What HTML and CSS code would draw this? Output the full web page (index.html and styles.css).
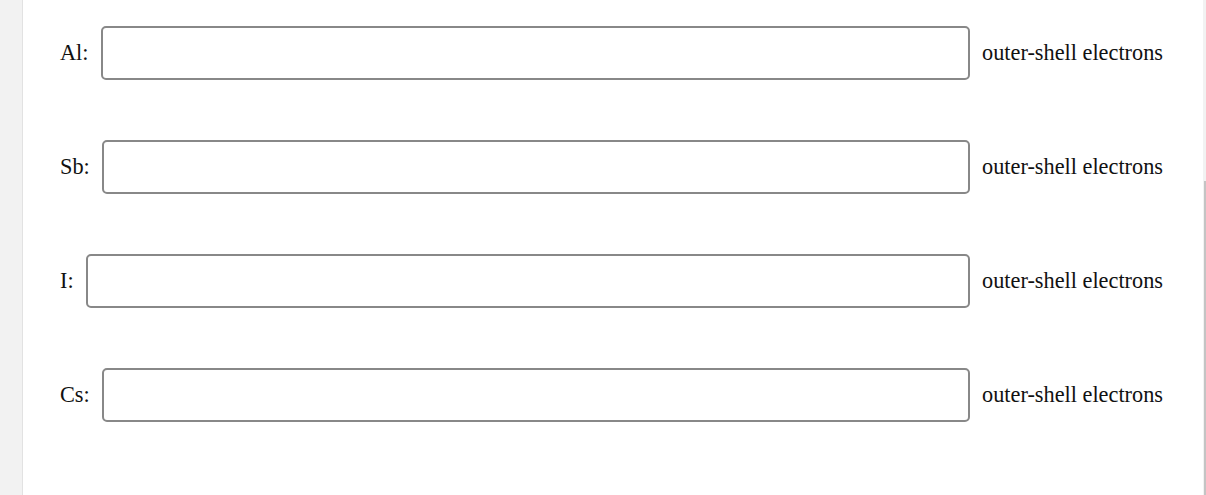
FILE: index.html
```html
<!DOCTYPE html>
<html lang="en">
<head>
  <meta charset="UTF-8" />
  <title>Valence electrons</title>
  <link rel="stylesheet" href="styles.css">
</head>
<body>
  <div class="gutter"></div>
  <div class="page">
    <div class="row">
      <label class="symbol" for="al">Al:</label>
      <input type="text" id="al" class="answer">
      <span class="unit">outer-shell electrons</span>
    </div>
    <div class="row">
      <label class="symbol" for="sb">Sb:</label>
      <input type="text" id="sb" class="answer">
      <span class="unit">outer-shell electrons</span>
    </div>
    <div class="row">
      <label class="symbol" for="i">I:</label>
      <input type="text" id="i" class="answer">
      <span class="unit">outer-shell electrons</span>
    </div>
    <div class="row">
      <label class="symbol" for="cs">Cs:</label>
      <input type="text" id="cs" class="answer">
      <span class="unit">outer-shell electrons</span>
    </div>
  </div>
  <div class="rail"><div class="rail-bar"></div></div>
</body>
</html>
```

FILE: styles.css
```css
html, body {
  height: 100%;
}
body {
  margin: 0;
  display: flex;
  background-color: #f2f2f2;
  font-family: "Liberation Serif", "Times New Roman", serif;
  font-size: 22.3px;
  color: #111;
  overflow: hidden;
}
.gutter {
  width: 22px;
  flex-shrink: 0;
}
.page {
  flex: 1;
  background-color: #fff;
  border-left: 1px solid #e2e2e2;
  padding: 26px 40px 0 37px;
  display: flex;
  flex-direction: column;
  gap: 60px;
}
.row {
  display: flex;
  align-items: center;
  gap: 12px;
}
.answer {
  flex: 1;
  height: 54px;
  box-sizing: border-box;
  border: 2px solid #888;
  border-radius: 5px;
  background: #fff;
  font: inherit;
  padding: 0 10px;
  outline: none;
}
.unit {
  white-space: nowrap;
}
.rail {
  width: 3px;
  flex-shrink: 0;
  padding-top: 181px;
}
.rail-bar {
  width: 2px;
  height: 100%;
  margin-left: 1px;
  background-color: #c4c4c4;
}
```
